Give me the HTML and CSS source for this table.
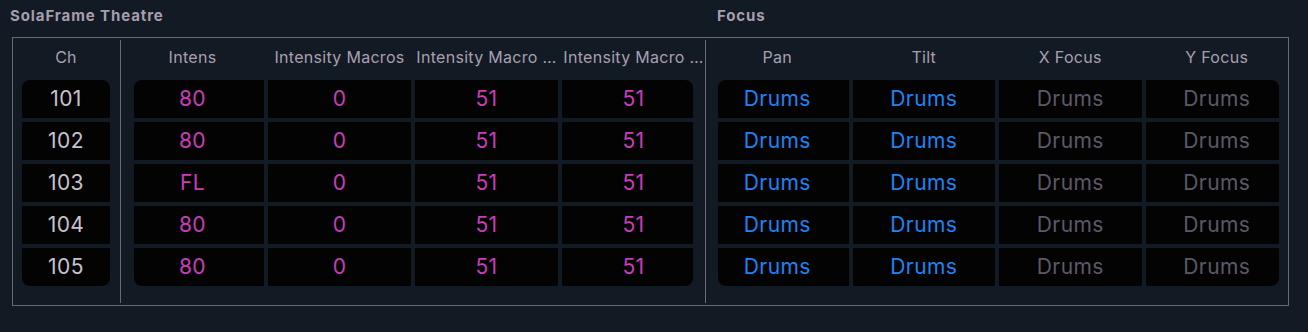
FILE: index.html
```html
<!DOCTYPE html>
<html lang="en">
<head>
    <meta charset="UTF-8">
    <meta name="viewport" content="width=device-width, initial-scale=1.0">
    <title>SolaFrame Theatre</title>
    <link rel="stylesheet" href="styles.css">
</head>
<body>
    <div class="group-titles">
        <div class="group-title fixture">SolaFrame Theatre</div>
        <div class="group-title">Focus</div>
    </div>

    <div class="sheet">
        <!-- channel numbers -->
        <div class="column ch-col">
            <div class="col-head">Ch</div>
            <div class="cells ch-cells">
                <div class="cell">101</div>
                <div class="cell">102</div>
                <div class="cell">103</div>
                <div class="cell">104</div>
                <div class="cell">105</div>
            </div>
        </div>

        <div class="divider"></div>

        <!-- intensity parameters -->
        <div class="column param-col intens-col">
            <div class="head-row">
                <div class="col-head">Intens</div>
                <div class="col-head">Intensity Macros</div>
                <div class="col-head">Intensity Macro …</div>
                <div class="col-head">Intensity Macro …</div>
            </div>
            <div class="cells param-cells intens">
                <div class="cell">80</div><div class="cell">0</div><div class="cell">51</div><div class="cell">51</div>
                <div class="cell">80</div><div class="cell">0</div><div class="cell">51</div><div class="cell">51</div>
                <div class="cell">FL</div><div class="cell">0</div><div class="cell">51</div><div class="cell">51</div>
                <div class="cell">80</div><div class="cell">0</div><div class="cell">51</div><div class="cell">51</div>
                <div class="cell">80</div><div class="cell">0</div><div class="cell">51</div><div class="cell">51</div>
            </div>
        </div>

        <div class="divider"></div>

        <!-- focus parameters -->
        <div class="column param-col focus-col">
            <div class="head-row">
                <div class="col-head">Pan</div>
                <div class="col-head">Tilt</div>
                <div class="col-head">X Focus</div>
                <div class="col-head">Y Focus</div>
            </div>
            <div class="cells param-cells focus">
                <div class="cell">Drums</div><div class="cell">Drums</div><div class="cell dim">Drums</div><div class="cell dim">Drums</div>
                <div class="cell">Drums</div><div class="cell">Drums</div><div class="cell dim">Drums</div><div class="cell dim">Drums</div>
                <div class="cell">Drums</div><div class="cell">Drums</div><div class="cell dim">Drums</div><div class="cell dim">Drums</div>
                <div class="cell">Drums</div><div class="cell">Drums</div><div class="cell dim">Drums</div><div class="cell dim">Drums</div>
                <div class="cell">Drums</div><div class="cell">Drums</div><div class="cell dim">Drums</div><div class="cell dim">Drums</div>
            </div>
        </div>
    </div>
</body>
</html>
```

FILE: styles.css
```css
* {
    margin: 0;
    padding: 0;
    box-sizing: border-box;
}
body {
    background: #121a23;
    font-family: Inter, "Noto Sans", sans-serif;
    color: #a8a0b0;
}

/* group labels above the sheet */
.group-titles {
    display: flex;
    height: 37px;
    padding: 6px 0 0 10px;
}
.group-title {
    font-size: 15px;
    font-weight: 700;
    letter-spacing: 0.9px;
    color: #a69eae;
    line-height: 20px;
}
.group-title.fixture {
    width: 707px;
}

.sheet {
    display: flex;
    width: 1277px;
    margin-left: 12px;
    border: 1px solid #6d6678;
}
.divider {
    width: 1px;
    margin: 2px 0;
    background: #6d6678;
}
.column {
    padding-bottom: 19px;
}
.col-head {
    height: 38px;
    line-height: 38px;
    margin-bottom: 4px;
    font-size: 16px;
    letter-spacing: 0.3px;
    text-align: center;
    white-space: nowrap;
    overflow: hidden;
}

.ch-col {
    width: 107px;
    padding-left: 9px;
    padding-right: 10px;
}
.intens-col {
    width: 584px;
}
.focus-col {
    flex: 1;
}
.head-row {
    display: grid;
    grid-template-columns: repeat(4, 1fr);
    column-gap: 4px;
}

/* value cells: black blocks, gaps show the page colour */
.cells {
    display: grid;
    grid-auto-rows: 38px;
    row-gap: 4px;
}
.ch-cells {
    border-radius: 8px;
    overflow: hidden;
}
.param-cells {
    grid-template-columns: repeat(4, 1fr);
    column-gap: 4px;
}
.intens {
    clip-path: inset(0 12px 0 13px round 8px);
}
.focus {
    clip-path: inset(0 9px 0 12px round 8px);
}
.cell {
    background: #030303;
    text-align: center;
    line-height: 38px;
    font-size: 21px;
    letter-spacing: 0.4px;
    color: #c8c2cc;
}
.intens .cell {
    color: #c73dba;
}
.focus .cell {
    color: #1d84f6;
}
.focus .cell.dim {
    color: #5d5868;
}
```
